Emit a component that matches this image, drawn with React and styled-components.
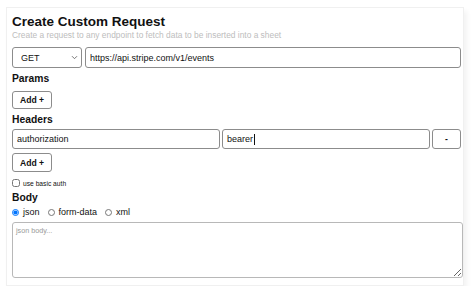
import React from "react";
import styled, { createGlobalStyle } from "styled-components";

const Global = createGlobalStyle`
  body {
    margin: 0;
    background: #fff;
    font-family: "Liberation Sans", Arial, Helvetica, sans-serif;
    color: #111;
  }
`;

const Card = styled.div`
  width: 458px;
  height: 279px;
  box-sizing: border-box;
  margin: 7px 0 0 6px;
  padding: 5px 2px 0 5px;
  border: 1px solid #f0f0f0;
  box-shadow: 3px 4px 5px rgba(0, 0, 0, 0.05);
`;

const Title = styled.h1`
  margin: 0;
  font-size: 13.5px;
  line-height: 17px;
  font-weight: 700;
`;

const Subtitle = styled.p`
  margin: 0;
  font-size: 8.4px;
  line-height: 10px;
  color: #bdbdbd;
`;

const Row = styled.div`
  display: flex;
  gap: ${(p) => p.gap || 3}px;
  margin-top: ${(p) => p.top || 0}px;
`;

const SelectBox = styled.label`
  display: flex;
  align-items: center;
  width: 70px;
  height: 21px;
  box-sizing: border-box;
  border: 1px solid #8c8c8c;
  border-radius: 3px;
  padding: 0 3px 0 8px;
  font-size: 9px;
  select {
    flex: 1;
    appearance: none;
    border: 0;
    background: transparent;
    font: inherit;
    padding: 0;
    color: #111;
    outline: none;
  }
`;

const Input = styled.input`
  flex: 1;
  min-width: 0;
  height: ${(p) => p.h || 21}px;
  box-sizing: border-box;
  border: 1px solid #8c8c8c;
  border-radius: 3px;
  padding: 0 4px;
  font-family: inherit;
  font-size: 9px;
  color: #111;
  outline: none;
`;

const FakeInput = styled.div`
  flex: 1;
  display: flex;
  align-items: center;
  height: 20px;
  box-sizing: border-box;
  border: 1px solid #8c8c8c;
  border-radius: 3px;
  padding: 0 4px;
  font-size: 9px;
`;

const Caret = styled.span`
  display: inline-block;
  width: 1px;
  height: 11px;
  margin-left: 1px;
  background: #111;
`;

const Label = styled.h3`
  margin: ${(p) => p.top || 0}px 0 0;
  font-size: 10.3px;
  line-height: 13px;
  font-weight: 700;
`;

const Button = styled.button`
  width: ${(p) => p.w || 40}px;
  height: ${(p) => p.h || 18}px;
  margin-top: ${(p) => p.top || 0}px;
  box-sizing: border-box;
  border: 1px solid #8c8c8c;
  border-radius: 3px;
  background: #fff;
  font-family: inherit;
  font-size: 8.6px;
  font-weight: 700;
  color: #111;
  padding: 0;
  display: block;
`;

const Check = styled.label`
  display: flex;
  align-items: center;
  gap: 3px;
  margin-top: 7px;
  font-size: 6.7px;
  input {
    margin: 0;
    width: 8px;
    height: 8px;
  }
`;

const Radios = styled.div`
  display: flex;
  align-items: center;
  gap: 8px;
  margin-top: 3px;
  font-size: 9px;
  label {
    display: flex;
    align-items: center;
    gap: 4px;
  }
  input {
    margin: 0;
    width: 7px;
    height: 7px;
  }
`;

const Body = styled.textarea`
  display: block;
  width: 451px;
  height: 56px;
  margin-top: 5px;
  box-sizing: border-box;
  border: 1px solid #b8b8b8;
  border-radius: 3px;
  padding: 3px;
  font-family: inherit;
  font-size: 7.2px;
  resize: vertical;
  outline: none;
  &::placeholder {
    color: #9a9a9a;
  }
`;

const Chevron = () => (
  <svg width="7" height="5" viewBox="0 0 7 5" fill="none">
    <path d="M1 1.2 3.5 3.7 6 1.2" stroke="#666" strokeWidth="0.9" />
  </svg>
);

export default function App() {
  return (
    <>
      <Global />
      <Card>
        <Title>Create Custom Request</Title>
        <Subtitle>
          Create a request to any endpoint to fetch data to be inserted into a sheet
        </Subtitle>
        <Row top={7}>
          <SelectBox>
            <select defaultValue="GET">
              <option>GET</option>
              <option>POST</option>
            </select>
            <Chevron />
          </SelectBox>
          <Input defaultValue="https://api.stripe.com/v1/events" />
        </Row>
        <Label top={4}>Params</Label>
        <Button top={6}>Add +</Button>
        <Label top={4}>Headers</Label>
        <Row top={3} gap={2}>
          <Input h={20} defaultValue="authorization" />
          <FakeInput>
            bearer
            <Caret />
          </FakeInput>
          <Button w={29} h={20}>
            -
          </Button>
        </Row>
        <Button top={4} h={19}>
          Add +
        </Button>
        <Check>
          <input type="checkbox" />
          use basic auth
        </Check>
        <Label top={4}>Body</Label>
        <Radios>
          <label>
            <input type="radio" name="body" defaultChecked />
            json
          </label>
          <label>
            <input type="radio" name="body" />
            form-data
          </label>
          <label>
            <input type="radio" name="body" />
            xml
          </label>
        </Radios>
        <Body placeholder="json body..." />
      </Card>
    </>
  );
}
